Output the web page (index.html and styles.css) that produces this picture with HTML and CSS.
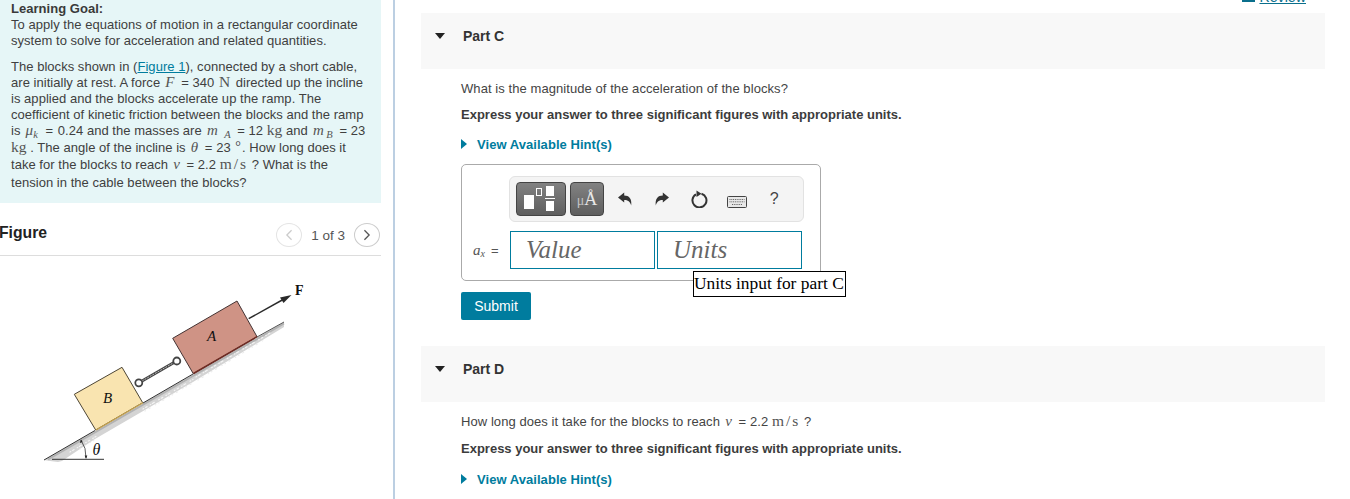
FILE: index.html
```html
<!DOCTYPE html>
<html lang="en">
<head>
<meta charset="utf-8">
<title>Part C and D</title>
<link rel="stylesheet" href="styles.css">
</head>
<body>
<div class="page">
  <aside class="left">
    <div class="goal">
      <div class="goal-block">
        <strong>Learning Goal:</strong><br>
        To apply the equations of motion in a rectangular coordinate system to solve for acceleration and related quantities.
      </div>
      <div class="goal-block problem">
        <span class="ln">The blocks shown in (<a href="#" class="fig-link">Figure 1</a>), connected by a short cable,</span>
        <span class="ln">are initially at rest. A force <i class="m">F</i> = 340 <span class="u u-n">N</span> directed up the incline</span>
        <span class="ln">is applied and the blocks accelerate up the ramp. The</span>
        <span class="ln">coefficient of kinetic friction between the blocks and the ramp</span>
        <span class="ln">is <i class="m">μ<sub>k</sub></i> <span class="eq-wide">=</span> 0.24 and the masses are <i class="m"><span class="mm">m</span><sub class="sub-a">A</sub></i> = 12 <span class="u">kg</span> and <i class="m"><span class="mm">m</span><sub>B</sub></i> = 23</span>
        <span class="ln ln-17"><span class="u">kg</span> . The angle of the incline is <i class="m">θ</i> = 23 <span class="deg">°</span>. How long does it</span>
        <span class="ln ln-17">take for the blocks to reach <i class="m">v</i> = 2.2 <span class="u ms">m/s</span> ? What is the</span>
        <span class="ln ln-18">tension in the cable between the blocks?</span>
      </div>
    </div>
    <div class="fig-head">
      <h2 class="fig-title">Figure</h2>
      <div class="pager">
        <span class="pg-btn pg-off"><svg class="chev" viewBox="0 0 10 14"><path d="M8 1.500 2.500 7 8 12.500"/></svg></span>
        <span class="pg-text">1 of 3</span>
        <span class="pg-btn"><svg class="chev" viewBox="0 0 10 14"><path d="M2 1.500 7.500 7 2 12.500"/></svg></span>
      </div>
    </div>
    <svg class="diagram" viewBox="0 256 381 243" width="381" height="243">
      <polygon points="44,460 284,322 284,327 193,382 95,439 62,461 58,462 50,461" fill="#d4d4d4"/>
      <line x1="48" y1="459.500" x2="284" y2="323.500" class="shade"/>
      <path d="M70 452 96 436.500M143 409 193 379.500M196 377 270 333" class="speck"/>
      <path d="M80 449 96 439M145 411 195 381.500M198 380 264 340" class="speck speck-2"/>
      <line x1="44" y1="460" x2="95" y2="430.500" class="ink"/>
      <line x1="143" y1="403" x2="193" y2="374" class="ink"/>
      <line x1="257" y1="337" x2="284" y2="322" class="ink-soft"/>
      <line x1="52" y1="459.300" x2="104" y2="459.300" class="ink"/>
      <path d="M81 440Q86.500 448 86 458" class="thin"/>
      <polygon points="81,439.500 79.800,443 82.500,442" fill="#222"/>
      <polygon points="86,459 84.700,455.500 87.300,455.500" fill="#222"/>
      <polygon points="74.300,394.300 122,367.300 142.700,402.700 95.700,430" fill="#f9e4b0" stroke="#4d4636" stroke-width="1"/>
      <line x1="96" y1="430" x2="143" y2="402.700" stroke="#c8a44e" stroke-width="1.300"/>
      <polygon points="172.700,338.300 237,301 257,336.700 193.300,373.700" fill="#cf9385" stroke="#433" stroke-width="1"/>
      <line x1="193.500" y1="373.500" x2="257" y2="336.700" stroke="#6e2c24" stroke-width="1.500"/>
      <line x1="142" y1="381" x2="174" y2="362.500" stroke="#444" stroke-width="3"/>
      <line x1="142" y1="381" x2="174" y2="362.500" stroke="#bbb" stroke-width="1" stroke-dasharray="2 1"/>
      <circle cx="138.800" cy="382.800" r="3.500" fill="none" stroke="#444" stroke-width="1.800"/>
      <circle cx="176.800" cy="361" r="3.500" fill="none" stroke="#444" stroke-width="1.800"/>
      <line x1="248.700" y1="318.700" x2="284" y2="299" stroke="#2a2a2a" stroke-width="1.500"/>
      <polygon points="291.500,295 280,297.500 283.500,303" fill="#2a2a2a"/>
      <text x="295" y="294.500" class="lbl-f">F</text>
      <text x="207" y="341" class="lbl">A</text>
      <text x="103" y="403" class="lbl">B</text>
      <text x="92.500" y="454.500" class="lbl lbl-theta">θ</text>
    </svg>
  </aside>

  <main class="right">
    <div class="review-bar">
      <svg class="review-icon" viewBox="0 0 13 6" width="13" height="6"><rect width="13" height="6" fill="#0a6f8c"/></svg>
      <a href="#" class="review-link">Review</a>
    </div>

    <section class="part part-c">
      <header class="part-head"><span class="caret"></span><h3 class="part-title">Part C</h3></header>
      <div class="part-body">
        <p class="q">What is the magnitude of the acceleration of the blocks?</p>
        <p class="inst">Express your answer to three significant figures with appropriate units.</p>
        <p class="hint"><span class="hint-caret"></span>View Available Hint(s)</p>
        <div class="answer">
          <div class="toolbar">
            <button class="tb-tpl" type="button" aria-label="Templates">
              <svg viewBox="0 0 50 34" width="50" height="34">
                <rect x="8" y="13" width="10" height="14" fill="#fff"/>
                <rect x="20.500" y="6.500" width="5" height="7" fill="none" stroke="#fff"/>
                <rect x="30" y="4" width="8" height="10" fill="#fff"/>
                <rect x="29" y="16" width="10" height="1" fill="#fff"/>
                <rect x="30" y="19" width="8" height="10" fill="#fff"/>
              </svg>
            </button>
            <button class="tb-unit" type="button"><span class="mu">μ</span><span class="ang">Å</span></button>
            <span class="tb-ico">
              <svg viewBox="0 0 16 16" width="16" height="16"><path d="M1 6.500 7.200 1.500V4.500C12 4.500 15 7.500 14.200 14.500 13 10.500 11 9 7.200 9V11.500Z"/></svg>
            </span>
            <span class="tb-ico">
              <svg viewBox="0 0 16 16" width="16" height="16"><path d="M15 6.500 8.800 1.500V4.500C4 4.500 1 7.500 1.800 14.500 3 10.500 5 9 8.800 9V11.500Z"/></svg>
            </span>
            <span class="tb-ico">
              <svg viewBox="0 0 18 18" width="18" height="18"><path class="ring" d="M6 4.300A7 7 0 1 0 11.500 3.700"/><path d="M6.500 0.500 11.500 3.700 6.500 7Z"/></svg>
            </span>
            <span class="tb-ico">
              <svg class="kb-svg" viewBox="0 0 20 12" width="20" height="12">
                <rect class="kb" x="0.500" y="0.500" width="19" height="11" rx="1"/>
                <path class="kb-keys" d="M2.500 3.500h15M2.500 5.800h15M5 8.500h10"/>
              </svg>
            </span>
            <span class="tb-help">?</span>
          </div>
          <div class="answer-row">
            <span class="var"><i>a<sub>x</sub></i><span class="eq">=</span></span>
            <div class="field">Value</div>
            <div class="field">Units</div>
          </div>
          <div class="tip">Units input for part C</div>
        </div>
        <button class="submit" type="button">Submit</button>
      </div>
    </section>

    <section class="part part-d">
      <header class="part-head"><span class="caret"></span><h3 class="part-title">Part D</h3></header>
      <div class="part-body part-body-d">
        <p class="q">How long does it take for the blocks to reach <i class="m">v</i> = 2.2 <span class="u ms">m/s</span> ?</p>
        <p class="inst inst-d">Express your answer to three significant figures with appropriate units.</p>
        <p class="hint hint-d"><span class="hint-caret"></span>View Available Hint(s)</p>
      </div>
    </section>
  </main>
</div>
</body>
</html>
```
FILE: styles.css
```css
* { box-sizing: border-box; }
html, body { margin: 0; padding: 0; height: 499px; overflow: hidden; background: #fff; }
body { font-family: "Liberation Sans", Arial, sans-serif; font-size: 13px; line-height: 16px; color: #444; }
.page { display: flex; height: 499px; overflow: hidden; }

.left { width: 395px; flex: none; border-right: 2px solid #bccfe2; }
.goal { width: 381px; height: 203px; background: #e6f6f7; padding: 1px 11px 0; color: #404040; letter-spacing: 0.035px; }
.goal strong { color: #3a3a3a; }
.goal-block { width: 358px; }
.problem { margin-top: 10px; }
.ln { display: block; white-space: nowrap; height: 16px; }
.ln-17 { height: 17px; padding-top: 1px; }
.ln-18 { height: 18px; padding-top: 2px; }
.fig-link { color: #007c9e; }
.m { font-family: "Liberation Serif", serif; font-style: italic; font-size: 15px; line-height: 0; color: #555; margin: 0 3px 0 1.500px; }
.m sub { font-size: 10.500px; line-height: 0; vertical-align: -3px; }
.sub-a { margin-left: 4px; }
.mm { letter-spacing: 2.500px; }
.eq-wide { margin: 0 1px; }
.u { font-family: "Liberation Serif", serif; font-size: 15.500px; line-height: 0; color: #555; }
.u-n { margin: 0 2px 0 1px; }
.ms { letter-spacing: 2px; }
.deg { font-family: "Liberation Serif", serif; font-size: 14px; line-height: 0; margin: 0 1px 0 1px; vertical-align: 1px; }

.fig-head { width: 381px; height: 53px; padding: 19px 1px 0 0; display: flex; justify-content: space-between; border-bottom: 1px solid #ddd; }
.fig-title { margin: 0 0 0 -1px; font-size: 15.750px; line-height: 22px; font-weight: 700; color: #222; }
.pager { display: flex; align-items: flex-start; gap: 9px; margin-top: 1px; }
.pg-btn { width: 26px; height: 24px; border: 1px solid #ccc; border-radius: 50%; display: flex; align-items: center; justify-content: center; background: #fff; }
.pg-off { border-color: #e4e4e4; }
.pg-text { font-size: 13.500px; line-height: 26px; color: #555; }
.chev { width: 10px; height: 12px; fill: none; stroke: #555; stroke-width: 1.500; }
.pg-off .chev { stroke: #ccc; }
.diagram { display: block; }
.ink { stroke: #333; stroke-width: 1; }
.ink-soft { stroke: #555; stroke-width: 1; }
.thin { fill: none; stroke: #333; stroke-width: 0.800; }
.shade { stroke: #b2b2b2; stroke-width: 2; }
.speck { fill: none; stroke: #f4f4f4; stroke-width: 1.200; stroke-linecap: round; stroke-dasharray: 0.8 2.3 1.6 3.7 0.6 1.9 2.2 5.1; }
.speck-2 { stroke: #ececec; stroke-dasharray: 0.5 4.3 1.2 6.1 0.4 3.3; }
.lbl { font-family: "Liberation Serif", serif; font-style: italic; font-size: 15px; fill: #111; }
.lbl-theta { font-size: 16px; }
.lbl-f { font-family: "Liberation Serif", serif; font-weight: 700; font-size: 14px; fill: #111; }

.right { flex: none; width: 955px; padding-left: 26px; }
.review-bar { height: 13px; width: 904px; display: flex; justify-content: flex-end; align-items: flex-start; gap: 4px; padding-right: 19px; }
.review-icon { display: block; margin-top: -4px; }
.review-link { display: block; margin-top: -11px; font-size: 14.200px; line-height: 16px; color: #0a6f8c; text-decoration: underline; }

.part { width: 904px; }
.part-head { height: 56px; background: #f8f8f8; display: flex; align-items: flex-start; padding: 15px 0 0 14px; }
.caret { width: 0; height: 0; border-left: 5.500px solid transparent; border-right: 5.500px solid transparent; border-top: 6px solid #222; margin-top: 5px; }
.part-title { margin: 0 0 0 18px; font-size: 14px; line-height: 16px; font-weight: 700; color: #333; }
.part-body { padding: 12px 0 0 40px; position: relative; }
.q { margin: 0; line-height: 16px; color: #444; letter-spacing: 0.070px; }
.inst { margin: 10px 0 0; line-height: 16px; font-weight: 700; color: #3c3c3c; }
.hint { margin: 14px 0 0; line-height: 16px; font-weight: 700; color: #007c9e; display: flex; align-items: center; letter-spacing: 0.050px; }
.hint-caret { width: 0; height: 0; border-top: 5px solid transparent; border-bottom: 5px solid transparent; border-left: 6px solid #007c9e; margin-right: 10px; margin-top: -2px; }

.answer { position: relative; width: 360px; height: 117px; margin-top: 11px; border: 1px solid #aaa; border-radius: 5px; padding: 11px 16px 0 47px; }
.toolbar { width: 295px; height: 46px; background: #f4f4f4; border: 1px solid #e2e2e2; border-radius: 6px; padding: 5px 0 0 6px; display: flex; align-items: flex-start; }
.tb-tpl, .tb-unit { display: block; padding: 0; height: 34px; border: 1px solid #444; border-radius: 4px; background: linear-gradient(#828282, #5e5e5e); }
.tb-tpl { width: 50px; }
.tb-tpl svg { display: block; margin: -1px; }
.tb-unit { width: 34px; margin-left: 4px; margin-right: 2px; font-family: "Liberation Serif", serif; color: #e8e8e8; text-align: center; white-space: nowrap; line-height: 32px; }
.mu { font-size: 14px; color: #c4c4c4; }
.ang { font-size: 18px; }
.tb-ico { width: 37.400px; height: 34px; display: flex; align-items: center; justify-content: center; }
.tb-ico svg { display: block; fill: #333; }
.tb-ico .kb-svg { margin-top: 5px; }
.ring { fill: none; stroke: #333; stroke-width: 2; }
.kb { fill: #e8e8e8; stroke: #444; }
.kb-keys { fill: none; stroke: #666; stroke-width: 1; stroke-dasharray: 1 0.800; }
.tb-help { width: 37.400px; height: 34px; text-align: center; font-size: 16px; line-height: 33px; color: #444; }

.answer-row { display: flex; align-items: stretch; gap: 2px; margin: 9px 0 0 -36px; }
.var { width: 34px; font-family: "Liberation Serif", serif; font-size: 15px; line-height: 38px; color: #555; white-space: nowrap; margin-right: 1px; }
.var sub { font-size: 10px; line-height: 0; vertical-align: -2px; }
.eq { font-family: "Liberation Sans", Arial, sans-serif; font-size: 13px; margin-left: 6px; }
.field { width: 145px; height: 38px; border: 1px solid #007c9e; background: #fff; padding-left: 15px; font-family: "Liberation Serif", serif; font-style: italic; font-size: 25px; line-height: 36px; color: #666; }
.tip { position: absolute; left: 231px; top: 106px; width: 153px; height: 26px; background: #fff; border: 1px solid #000; font-family: "Liberation Serif", serif; font-size: 17.400px; line-height: 22px; color: #000; white-space: nowrap; overflow: hidden; }
.submit { display: block; margin-top: 11px; width: 70px; height: 28px; padding: 0; border: 0; border-radius: 2px; background: #007c9e; color: #fff; font-family: "Liberation Sans", Arial, sans-serif; font-size: 14px; }

.part-d { margin-top: 26px; }
.part-body-d { padding-top: 12px; }
.inst-d { margin-top: 11px; }
.hint-d { margin-top: 15px; }
```
